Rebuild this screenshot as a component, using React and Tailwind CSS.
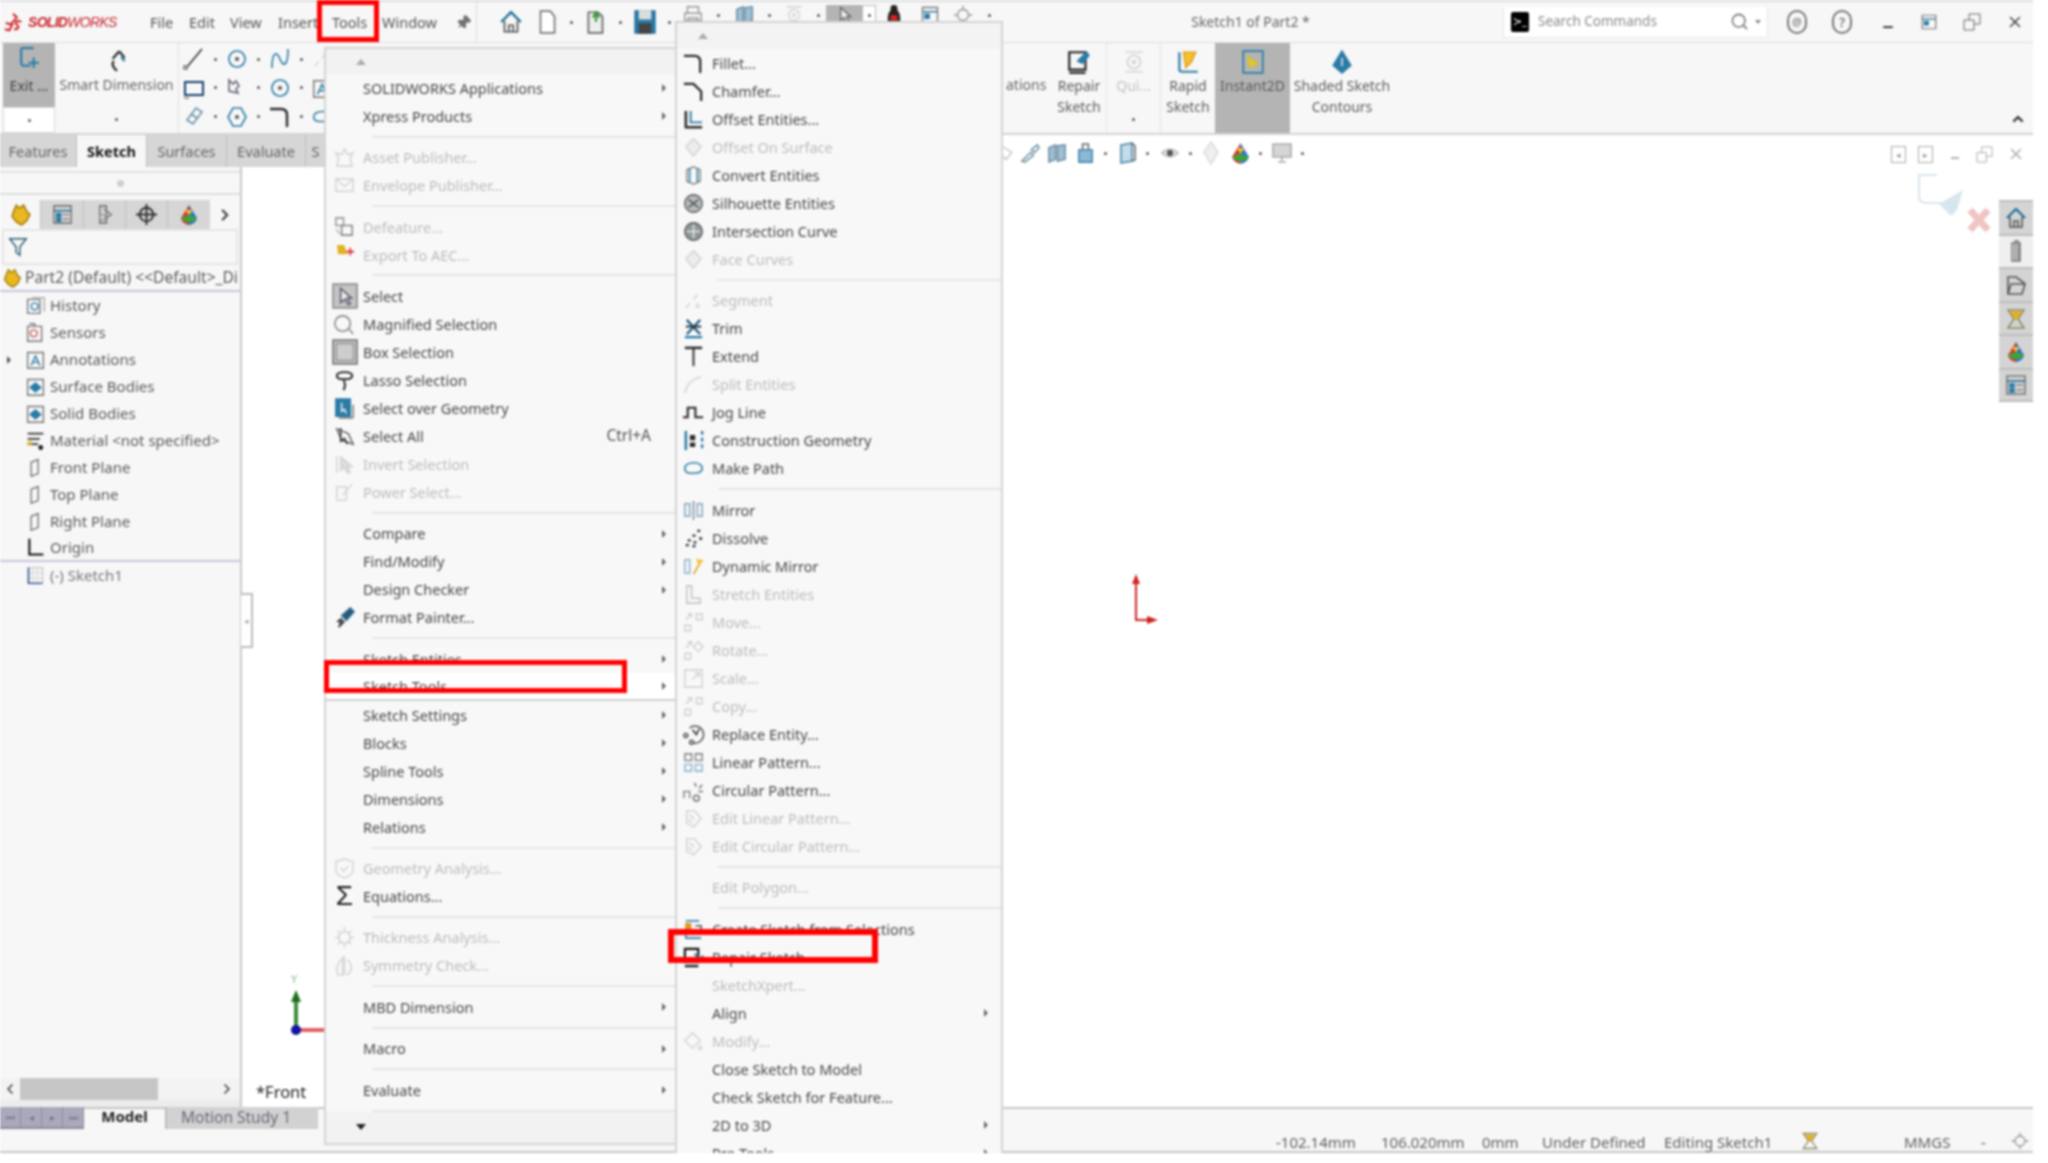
import { ChevronLeft, ChevronRight, ChevronUp, Search, X, Minus, Pin } from 'lucide-react';

const BLUE = '#2a7ba6';
const DARK = '#2b2b2b';
const GREY = '#8a8a8a';
const PALE = '#d4d4d4';

// each icon: list of [path, stroke, fill, strokeWidth]
const ICONS = {
  fillet: [['M2 4h11q6 0 6 6v12', DARK, null, 2.4]],
  chamfer: [['M2 4h10l8 8v10', DARK, null, 2.4]],
  offset: [['M4 3v17h17', DARK, null, 2.6], ['M9 3v12h12', BLUE, null, 2]],
  diamondPale: [['M12 3l8 8-8 10-8-10z', PALE, '#ececec']],
  cube: [['M5 6l7-3 7 3v12l-7 3-7-3z', GREY], ['M8 5v14M16 5v14', BLUE]],
  ball: [['M12 3a9 9 0 1 0 .01 0z', '#666', '#b5bcc0'], ['M7 8l10 8M17 8l-10 8', '#555']],
  ball2: [['M12 3a9 9 0 1 0 .01 0z', '#666', '#8f979b'], ['M5 12h14M12 5v14', '#e4e4e4']],
  segment: [['M4 20l4-5M12 11l4-5', PALE], ['M14 18h5M16 14v6', PALE]],
  trim: [['M3 21h18', BLUE, null, 2.4], ['M5 3l14 15M19 3L5 18', '#1e5f85', null, 2.4], ['M4 10h16', DARK, null, 2]],
  extend: [['M3 3h18', DARK, null, 2.6], ['M12 3v19', DARK, null, 2]],
  split: [['M3 21Q6 7 20 4', PALE]],
  jog: [['M1 17h5V7h8v10h8', DARK, null, 2.2]],
  construct: [['M4 2v20', BLUE, null, 2.6], ['M21 2v4M21 9v4M21 16v4', BLUE, null, 2.4], ['M9 7h4v4H9zM9 15h4v3H9z', DARK, DARK]],
  path: [['M3 12c0-5 6-6 10-6s8 2 8 6-5 5-9 5-9 0-9-5z', BLUE]],
  mirror: [['M12 2v20', GREY], ['M3 5h5v13H3zM16 5h5v13h-5z', '#7fa6bd']],
  dissolve: [['M6 14h3M11 9h3M16 4h3M4 19h3M12 16h3M18 12h3M11 20h3', DARK, null, 2.4]],
  dynamic: [['M3 5h5v14H3z', '#8fb2c8'], ['M12 20l8-14', '#e0a020'], ['M16 5l5 1-3 4z', '#f2c230', '#f2c230']],
  stretch: [['M5 3h5v13h9v5H5z', '#c4c4c4']],
  move: [['M4 9l6-6M6 3h4v4', PALE], ['M15 3h6v6h-6zM3 15h6v6H3z', PALE]],
  rotate: [['M4 9l6-6M6 3h4v4', PALE], ['M17 3l5 5-5 5-5-5zM3 15h6v6H3z', PALE]],
  scale: [['M3 3h18v18H3z', PALE], ['M11 13l7-7M13 6h5v5', PALE]],
  replace: [['M8 5a9 9 0 1 1 4 16', '#555'], ['M11 7l4 5 3-6', '#333'], ['M2 13a2 2 0 1 0 4 0 2 2 0 1 0-4 0M8 20a2 2 0 1 0 4 0 2 2 0 1 0-4 0', '#555']],
  linear: [['M3 3h7v7H3zM14 3h7v7h-7z', GREY], ['M3 14h7v7H3zM14 14h7v7h-7z', '#8fb6d0']],
  circular: [['M2 20v-7h6v7', GREY], ['M13 4l2 4M21 6l-3 4M22 13h-5M12 20a3 3 0 1 0 6 0 3 3 0 1 0-6 0', '#777']],
  editPale: [['M5 4h8l7 8-8 9-7-4z', PALE], ['M8 8l5 5M7 13l4 4', PALE]],
  createSk: [['M4 3h14', BLUE], ['M4 6h5v5H4z', '#e09a20', '#e09a20'], ['M4 12v9h16', BLUE], ['M14 8h6v7', '#555']],
  repair: [['M3 3h14v14H3z', '#111', null, 2.2], ['M3 21h14', '#111', null, 2.2], ['M13 8l6 6 3-4', BLUE, null, 2.2]],
  modify: [['M11 3l8 8-8 8-8-8z', PALE], ['M19 15v7M16 19h6', PALE]],
  asset: [['M12 3l3 6 6-2-3 6 2 8H4l2-8-3-6 6 2z', PALE]],
  envelope: [['M3 5h18v13H3zM3 5l9 8 9-8', PALE]],
  defeature: [['M3 3h8v8H3z', '#999'], ['M9 11h11v10H9z', '#888'], ['M3 15l5 5', '#bbb']],
  aec: [['M5 3h6l3 8H6z', '#e3b022', '#e3b022'], ['M18 5v8M14 9h8', '#d22']],
  select: [['M1 1h22v22H1z', '#8d8d8d', '#c4c4c4'], ['M8 5v13l4-3 3 5 2-1-3-5h4z', '#667', '#eee']],
  magnify: [['M10 3a8 8 0 1 0 .01 0zM16 16l5 6', '#888']],
  box: [['M1 1h22v22H1z', '#777', '#cdcdcd'], ['M4 4h16v16H4z', '#999']],
  lasso: [['M4 7c0-5 16-5 16 0s-16 5-16 0zM11 12q3 4 0 10', '#222', null, 2]],
  over: [['M3 2h15v18H3z', '#2a7ba6', '#2a7ba6'], ['M9 6v9l3-2 2 4', '#eee'], ['M21 8v14M6 22h15', '#777']],
  all: [['M4 4l12 5 5 11-12-4z', '#666'], ['M8 3v14l4-3 3 6', '#333']],
  invert: [['M4 3v18', PALE], ['M8 4v14l4-3 3 6 3-1-3-6h5z', PALE, '#dcdcdc']],
  power: [['M4 6h10v14H4z', PALE], ['M10 15L20 3', PALE]],
  painter: [['M18 2l4 4-8 9-5-5z', '#2a7ba6', '#33536b'], ['M9 13l-4 3 3 1-2 5 6-6', '#444', '#555']],
  geometry: [['M12 2l9 3v8q0 6-9 9-9-3-9-9V5z', PALE], ['M8 11l3 4 5-6', PALE]],
  thickness: [['M12 6a6 6 0 1 0 .01 0zM12 1v4M12 19v4M2 12h4M18 12h4M5 5l3 3M16 16l3 3M19 5l-3 3M8 16l-3 3', PALE]],
  symmetry: [['M12 2v20M5 22q-3-8 2-14l3-4v18zM15 6q7 6 2 14l-3 2', PALE]],
  history: [['M3 5h14v16H3z', '#777'], ['M8 3h14v16', '#aaa'], ['M11 9a4 4 0 1 0 .01 0z', BLUE]],
  sensors: [['M3 5h16v17H3z', '#777'], ['M10 9a4 4 0 1 0 .01 0z', '#c55'], ['M5 2h6v3', '#777']],
  annot: [['M3 4h18v18H3z', '#777'], ['M7 19l5-11 5 11M9 15h6', BLUE]],
  bodies: [['M3 4h18v18H3z', '#777'], ['M6 13l6-5 6 5-6 5z', BLUE, BLUE]],
  material: [['M3 4h18M3 10h14M3 16h12', '#333', null, 2], ['M4 14h3v3H4z', '#e3b022', '#e3b022'], ['M18 18a2 2 0 1 0 .01 0z', '#222', '#222']],
  plane: [['M15 3v16l-8 3V6z', '#777']],
  origin: [['M5 2v18h16', '#111', null, 2.4]],
  sketch: [['M4 3h16v18H4z', '#c8c8c8'], ['M9 3v18M14 3v18M4 9h16M4 15h16', '#dcdcdc'], ['M4 3v18h16', '#1f3f90']],
  home: [['M3 12l9-9 9 9', '#1f6c94', null, 2.2], ['M6 11v10h12V11M10 21v-6h4v6', '#555']],
  page: [['M6 2h9l4 5v15H6z', '#777', '#fff']],
  open: [['M5 3h9l4 4v15H5z', '#666', '#eee'], ['M12 3v9M9 8l3-5 3 5', '#3c9a3c', null, 2]],
  save: [['M3 2h18v20H3z', '#1d6d9b', '#2a7ba6'], ['M7 2h10v7H7z', '#ddd', '#ddd'], ['M7 14h10v8H7z', '#444', '#444']],
  print: [['M6 3h12v7H6zM3 10h18v8H3zM7 15h10v6H7z', '#999']],
  cursor: [['M8 3v15l4-3 3 6 3-1-3-6h5z', '#666', '#eee']],
  bottle: [['M12 2a3 3 0 0 1 3 3v2q3 3 3 7v7H6v-7q0-4 3-7V5a3 3 0 0 1 3-3z', '#222', '#222'], ['M9 13h6v4H9z', '#d22', '#d22']],
  wnd: [['M3 3h18v18H3z', '#777'], ['M3 8h18', '#1f6c94'], ['M6 11h5v5H6z', '#2a7ba6', '#2a7ba6']],
  gear: [['M12 6a6 6 0 1 0 .01 0zM12 2v4M12 18v4M2 12h4M18 12h4', '#999']],
  target: [['M12 5a7 7 0 1 0 .01 0z', '#333', null, 2], ['M12 1v22M1 12h22', '#333', null, 2]],
  config: [['M7 3h7v18H7z', '#777'], ['M11 6l8 6-8 6', '#777'], ['M10 12a3 3 0 1 0 .01 0z', '#999']],
  ribExit: [['M4 2h12', BLUE, null, 2], ['M4 2v14q0 3 4 3h5', BLUE, null, 2], ['M16 11v10M11 16h10', BLUE, null, 2]],
  dim: [['M14 3l5 6M14 3L8 10', '#333', null, 2.2], ['M9 12q-3 4 3 9', '#333', null, 2.2], ['M16 8l3 4', BLUE, null, 2.2]],
  line: [['M20 2L5 20', '#333'], ['M2 22h3v-3H2z', '#777']],
  circleB: [['M12 4a8 8 0 1 0 .01 0z', BLUE], ['M11 11h2v2h-2z', '#555']],
  spline: [['M4 21C4 4 9 4 12 12s8 8 8-10', BLUE]],
  rect: [['M3 6h18v13H3z', '#123f6b', null, 2], ['M2 22h5', GREY]],
  slot: [['M4 4l4 4 3-3 3 5-3 3 2 4-9-2z', '#667']],
  hex: [['M8 3h8l5 9-5 9H8l-5-9z', BLUE], ['M11 11h2v2h-2z', '#555']],
  chain: [['M5 15l9-12 6 4-9 12z', '#6a90a8'], ['M9 9l6 4', '#6a90a8']],
  repairRib: [['M3 3h15v16H3z', '#222', null, 2], ['M3 22h15', '#222', null, 2], ['M11 11l8-8 2 3-6 7z', BLUE, BLUE]],
  quick: [['M4 3h16M4 21h16', PALE], ['M12 6a6 6 0 1 0 .01 0z', PALE], ['M11 11h2v2h-2z', PALE]],
  rapid: [['M4 3v16q0 2 3 2h14', BLUE, null, 2], ['M8 3h11l-4 9-5 5z', '#e8a020', '#f2c230']],
  instant: [['M3 2h18v20H3z', BLUE], ['M7 7l9 6-7 4z', '#d8c030', '#e0c830']],
  shaded: [['M12 2l8 13-8 7-8-7z', '#2a7ba6', '#2a7ba6'], ['M12 8v8', '#cde']],
  hud1: [['M5 3l14 8-7 9-7-8z', '#b8c4cc']],
  hud2: [['M3 20l9-9 3 3-9 7zM13 8l6-5 2 3-5 5z', '#6f8fa3']],
  hud3: [['M3 6l7-3v15l-7 3zM12 4l8-1v15l-8 2z', '#6f8fa3', '#9fc0d4']],
  hud4: [['M5 8h14v13H5z', '#4a88ad', '#8ab9d4'], ['M9 8V2h6v6', '#666']],
  hud5: [['M5 4l11-2v18l-11 2z', '#4a88ad', '#c4dce9'], ['M16 2l3 3v14l-3 1', '#666']],
  eye: [['M2 12q10-9 20 0-10 9-20 0z', '#bbb', '#e3e3e3'], ['M12 9a3 3 0 1 0 .01 0z', '#555', '#555']],
  hudDiamond: [['M12 1l7 10-7 12-7-12z', '#ddd', '#efefef']],
  monitor: [['M3 3h18v13H3z', '#aaa', '#d5d5d5'], ['M12 16v4M8 21h8', '#aaa']],
  folder: [['M4 21V4h8l8 6v1M4 21l3-10h14l-3 10z', '#555']],
  parts: [['M8 4h8v18H8zM11 4v18M14 4v18', '#777'], ['M10 2h5', '#777']],
  appear: [['M4 3h16l-6 9 6 9H4l6-9z', '#8c8c6a'], ['M7 5h10l-5 7z', '#e3b022', '#e3b022']],
  custom: [['M3 3h18v18H3z', '#777'], ['M3 8h18', '#1f6c94'], ['M6 11h4v3H6zM6 16h4v3H6z', '#2a7ba6', '#2a7ba6'], ['M12 12h7M12 17h7', '#888']],
  filter: [['M3 3h18l-7 9v9l-4-3v-6z', '#2b5a70']],
  part: [['M5 10l3-7 3 3 4-3 3 6 3 3-3 6-5 4-5-3-4-5z', '#a87f12', '#e8b820']],
};

function Ico({ name, size = 22, className = '' }) {
  const parts = ICONS[name] || [];
  return (
    <svg viewBox="0 0 24 24" width={size} height={size} fill="none" strokeWidth="1.6" className={`shrink-0 ${className}`}>
      {parts.map((p, i) => <path key={i} d={p[0]} stroke={p[1]} fill={p[2] || 'none'} strokeWidth={p[3]} />)}
    </svg>
  );
}

// colour wheel used for the appearance buttons
function Wheel({ size = 22 }) {
  return (
    <svg viewBox="0 0 24 24" width={size} height={size} className="shrink-0">
      <path d="M12 2L4 15a9 8 0 0 0 8 7z" fill="#d7372c" />
      <path d="M12 2l8 13a9 8 0 0 1-8 7z" fill="#2f6fd0" />
      <path d="M4 15a9 8 0 0 0 16 0l-8-3z" fill="#3aa63a" />
      <path d="M12 12l-4-5h8z" fill="#f2c230" />
    </svg>
  );
}

const SEP = '-';
const TOOLS_MENU = [
  { t: 'SOLIDWORKS Applications', sub: 1 }, { t: 'Xpress Products', sub: 1 }, SEP,
  { t: 'Asset Publisher...', i: 'asset', off: 1 }, { t: 'Envelope Publisher...', i: 'envelope', off: 1 }, SEP,
  { t: 'Defeature...', i: 'defeature', off: 1 }, { t: 'Export To AEC...', i: 'aec', off: 1 }, SEP,
  { t: 'Select', i: 'select' }, { t: 'Magnified Selection', i: 'magnify' }, { t: 'Box Selection', i: 'box' },
  { t: 'Lasso Selection', i: 'lasso' }, { t: 'Select over Geometry', i: 'over' }, { t: 'Select All', i: 'all', key: 'Ctrl+A' },
  { t: 'Invert Selection', i: 'invert', off: 1 }, { t: 'Power Select...', i: 'power', off: 1 }, SEP,
  { t: 'Compare', sub: 1 }, { t: 'Find/Modify', sub: 1 }, { t: 'Design Checker', sub: 1 }, { t: 'Format Painter...', i: 'painter' }, SEP,
  { t: 'Sketch Entities', sub: 1 }, { t: 'Sketch Tools', sub: 1, hot: 1 }, { t: 'Sketch Settings', sub: 1 }, { t: 'Blocks', sub: 1 },
  { t: 'Spline Tools', sub: 1 }, { t: 'Dimensions', sub: 1 }, { t: 'Relations', sub: 1 }, SEP,
  { t: 'Geometry Analysis...', i: 'geometry', off: 1 }, { t: 'Equations...', sigma: 1 }, SEP,
  { t: 'Thickness Analysis...', i: 'thickness', off: 1 }, { t: 'Symmetry Check...', i: 'symmetry', off: 1 }, SEP,
  { t: 'MBD Dimension', sub: 1 }, SEP, { t: 'Macro', sub: 1 }, SEP, { t: 'Evaluate', sub: 1 },
];

const SKETCH_MENU = [
  { t: 'Fillet...', i: 'fillet' }, { t: 'Chamfer...', i: 'chamfer' }, { t: 'Offset Entities...', i: 'offset' },
  { t: 'Offset On Surface', i: 'diamondPale', off: 1 }, { t: 'Convert Entities', i: 'cube' }, { t: 'Silhouette Entities', i: 'ball' },
  { t: 'Intersection Curve', i: 'ball2' }, { t: 'Face Curves', i: 'diamondPale', off: 1 }, SEP,
  { t: 'Segment', i: 'segment', off: 1 }, { t: 'Trim', i: 'trim' }, { t: 'Extend', i: 'extend' }, { t: 'Split Entities', i: 'split', off: 1 },
  { t: 'Jog Line', i: 'jog' }, { t: 'Construction Geometry', i: 'construct' }, { t: 'Make Path', i: 'path' }, SEP,
  { t: 'Mirror', i: 'mirror' }, { t: 'Dissolve', i: 'dissolve' }, { t: 'Dynamic Mirror', i: 'dynamic' }, { t: 'Stretch Entities', i: 'stretch', off: 1 },
  { t: 'Move...', i: 'move', off: 1 }, { t: 'Rotate...', i: 'rotate', off: 1 }, { t: 'Scale...', i: 'scale', off: 1 }, { t: 'Copy...', i: 'move', off: 1 },
  { t: 'Replace Entity...', i: 'replace' }, { t: 'Linear Pattern...', i: 'linear' }, { t: 'Circular Pattern...', i: 'circular' },
  { t: 'Edit Linear Pattern...', i: 'editPale', off: 1 }, { t: 'Edit Circular Pattern...', i: 'editPale', off: 1 }, SEP,
  { t: 'Edit Polygon...', off: 1 }, SEP,
  { t: 'Create Sketch from Selections', i: 'createSk' }, { t: 'Repair Sketch', i: 'repair' }, { t: 'SketchXpert...', off: 1 },
  { t: 'Align', sub: 1 }, { t: 'Modify...', i: 'modify', off: 1 }, { t: 'Close Sketch to Model' }, { t: 'Check Sketch for Feature...' },
  { t: '2D to 3D', sub: 1 }, { t: 'Pro Tools', sub: 1 },
];

function MenuRow({ row, indent, subGap }) {
  return (
    <div className={`h-[28px] flex items-center shrink-0 ${row.hot ? 'bg-white border-b-2 border-[#cfcfcf]' : ''}`}>
      <div className="w-[37px] flex justify-center" style={{ marginLeft: indent }}>
        {row.i && <Ico name={row.i} size={row.i === 'select' || row.i === 'box' ? 26 : 23} />}
        {row.sigma && <span className="text-[28px] leading-none text-[#222] font-['Liberation_Sans']">Σ</span>}
      </div>
      <span className={`flex-1 whitespace-nowrap ${row.off ? 'text-[#bcbcbc]' : 'text-[#474747]'}`}>{row.t}</span>
      {row.key && <span className="text-[#555] text-[15.5px] mr-[24px]">{row.key}</span>}
      {row.sub && <span style={{ marginRight: subGap }} className="w-0 h-0 border-y-[4px] border-y-transparent border-l-[4px] border-l-[#666]" />}
    </div>
  );
}

function MenuRows({ rows, sepLeft, sepH, indent, subGap }) {
  return rows.map((row, i) => row === SEP
    ? <div key={i} className="flex items-center shrink-0" style={{ paddingLeft: sepLeft, height: sepH }}><div className="h-[2px] w-full bg-[#e6e6e6]" /></div>
    : <MenuRow key={i} row={row} indent={indent} subGap={subGap} />);
}

function Dot() {
  return <span className="block w-[3px] h-[3px] rounded-full bg-[#555] shrink-0" />;
}

// row of toolbar items placed by their centre x, measured from the row's left edge
function Spaced({ items, className = '' }) {
  let end = 0;
  return (
    <div className={`flex items-center ${className}`}>
      {items.map(([cx, size, node], i) => {
        const ml = cx - size / 2 - end;
        end = cx + size / 2;
        return <span key={i} style={{ marginLeft: ml, width: size }} className="shrink-0 flex justify-center">{node}</span>;
      })}
    </div>
  );
}

function TitleBar() {
  return (
    <div className="h-[43px] shrink-0 flex items-center border-t-2 border-[#dedede] bg-[#f7f7f7] border-b border-b-[#dcdcdc]">
      <div className="w-[150px] flex items-center pl-[3px] gap-[3px]">
        <svg viewBox="0 0 24 24" width="22" height="24" fill="none" stroke="#d2232a" strokeWidth="2.2">
          <path d="M11 3l4 4-6 7M3 13l7 2-3 6-5-1M20 12c-5-3-8 1-5 3s2 5-3 5" />
        </svg>
        <span className="text-[14px] italic text-[#c8242b] font-['Liberation_Sans'] tracking-[-0.7px]"><b>SOLID</b>WORKS</span>
      </div>
      {[['File', 39], ['Edit', 41], ['View', 48], ['Insert', 54], ['Tools', 50], ['Window', 76]].map(([m, w]) => (
        <span key={m} style={{ width: w }} className="text-[#555] shrink-0">{m}</span>
      ))}
      <Pin size={15} className="text-[#666] rotate-45 fill-[#777] shrink-0 -ml-[2px]" />
      <div className="w-px h-[40px] bg-[#dcdcdc] ml-[5px] mr-[21px] shrink-0" />
      <div className="flex items-center gap-[10px]">
        <Ico name="home" size={26} /><Ico name="page" size={26} /><Dot /><Ico name="open" size={26} /><Dot /><Ico name="save" size={26} /><Dot />
      </div>
      <div className="flex-1 text-center text-[#666] text-[14px] pl-[327px]">Sketch1 of Part2 *</div>
      <div className="w-[265px] h-[31px] bg-white border-r border-b border-l border-[#e5e5e5] flex items-center pl-[7px] mr-[19px]">
        <div className="w-[18px] h-[20px] bg-black rounded-[2px] text-white text-[11px] leading-[18px] pl-[2px] shrink-0">≻_</div>
        <span className="ml-[9px] flex-1 text-[#8a8a8a] text-[13.5px]">Search Commands</span>
        <Search size={19} className="text-[#777] mr-[6px]" />
        <span className="w-0 h-0 mr-[6px] border-x-[3px] border-x-transparent border-t-[4px] border-t-[#888]" />
      </div>
      <div className="flex items-center gap-[25px] pr-[9px]">
        <span className="w-[20px] h-[24px] rounded-full border-2 border-[#777] text-center text-[11px] leading-[20px] text-[#666]">@</span>
        <span className="w-[20px] h-[24px] mr-[4px] rounded-full border-2 border-[#777] text-center text-[13px] leading-[20px] text-[#444]">?</span>
        <Minus size={14} className="text-[#222] mt-[10px]" strokeWidth={3} />
        <Ico name="wnd" size={18} />
        <svg viewBox="0 0 18 18" width="18" height="18" fill="none" stroke="#666"><path d="M1 7h10v10H1zM6 7V1h11v10h-6" /></svg>
        <X size={18} className="text-[#444]" />
      </div>
    </div>
  );
}

function RibbonBtn({ w, icon, lines, grey, dot, dim }) {
  return (
    <div style={{ width: w }} className={`shrink-0 h-full flex flex-col items-center pt-[6px] ${grey ? 'bg-[#b4b4b4]' : ''}`}>
      <Ico name={icon} size={26} />
      <div className={`leading-[21px] text-[14px] text-center whitespace-nowrap ${dim ? 'text-[#c2c2c2]' : 'text-[#5c5c5c]'}`}>
        {lines.map((l) => <div key={l}>{l}</div>)}
      </div>
      {dot && <div className="mt-auto mb-[12px]"><Dot /></div>}
    </div>
  );
}

function Ribbon() {
  const cols = [['line', 'rect', 'chain'], ['circleB', 'slot', 'hex'], ['spline', 'circleB', 'fillet']];
  return (
    <div className="h-[92px] shrink-0 flex bg-[#f7f7f7] border-b-2 border-[#d4d4d4] relative">
      <div className="w-[52px] ml-[3px] shrink-0 flex flex-col">
        <div className="h-[64px] bg-[#b4b4b4] flex flex-col items-center pt-[3px]">
          <Ico name="ribExit" size={25} />
          <span className="mt-[8px] text-[#444] text-[14px]">Exit ...</span>
        </div>
        <div className="flex-1 bg-white border border-[#d8d8d8] flex items-center justify-center"><Dot /></div>
      </div>
      <div className="w-[124px] shrink-0 flex flex-col items-center pt-[5px] border-r border-[#e2e2e2]">
        <Ico name="dim" size={26} />
        <span className="mt-[4px] text-[#666] text-[14px] whitespace-nowrap">Smart Dimension</span>
        <div className="mt-auto mb-[12px]"><Dot /></div>
      </div>
      <div className="flex flex-col justify-around py-[2px] pl-[3px]">
        {[0, 1, 2].map((r) => (
          <div key={r} className="flex items-center gap-[8px]">
            {cols.map((c, i) => (
              <div key={i} className="flex items-center gap-[8px]"><Ico name={c[r]} size={24} /><Dot /></div>
            ))}
            <Ico name={['segment', 'annot', 'path'][r]} size={22} />
          </div>
        ))}
      </div>
      <div className="w-[719px] shrink-0" />
      <div className="shrink-0 flex h-full">
        <RibbonBtn w={54} icon="repairRib" lines={['Repair', 'Sketch']} />
        <div className="w-px bg-[#e4e4e4]" />
        <RibbonBtn w={53} icon="quick" lines={['Qui...']} dim dot />
        <div className="w-px bg-[#e4e4e4]" />
        <RibbonBtn w={54} icon="rapid" lines={['Rapid', 'Sketch']} />
        <RibbonBtn w={75} icon="instant" lines={['Instant2D']} grey />
        <RibbonBtn w={104} icon="shaded" lines={['Shaded Sketch', 'Contours']} />
      </div>
      <ChevronUp size={16} strokeWidth={3.5} className="absolute right-[7px] bottom-[6px] text-[#333]" />
    </div>
  );
}

function TabsRow() {
  const tabs = [['Features', 77], ['Sketch', 70, 1], ['Surfaces', 80], ['Evaluate', 79], ['S', 20]];
  // centres are page x minus the 1002px where this row starts
  const hud = [
    [4, 20, <Ico name="hud1" size={20} />], [28, 23, <Ico name="hud2" size={23} />], [55, 23, <Ico name="hud3" size={23} />], [83, 23, <Ico name="hud4" size={23} />],
    [103, 3, <Dot />], [126, 24, <Ico name="hud5" size={24} />], [145, 3, <Dot />], [168, 20, <Ico name="eye" size={20} />], [188, 3, <Dot />],
    [209, 24, <Ico name="hudDiamond" size={24} />], [238, 25, <Wheel size={25} />], [258, 3, <Dot />], [280, 24, <Ico name="monitor" size={24} />], [300, 3, <Dot />],
  ];
  return (
    <div className="h-[32px] shrink-0 flex">
      {tabs.map(([t, w, on]) => (
        <div key={t} style={{ width: w }} className={`shrink-0 flex items-center justify-center border-r border-[#bdbdbd] ${on ? 'bg-[#f7f7f7] text-[#111] font-bold' : 'bg-[#d6d6d6] text-[#666]'}`}>{t}</div>
      ))}
      <div className="w-[676px] shrink-0" />
      <Spaced items={hud} className="h-[32px] mt-[2px] w-[310px] shrink-0" />
      <div className="flex-1 flex items-center justify-end gap-[9px] pr-[8px] mt-[6px] text-[#999]">
        <span className="w-[15px] h-[17px] border border-[#aaa] text-[9px] leading-[15px] text-center">◂</span>
        <span className="w-[15px] h-[17px] border border-[#aaa] ml-[3px] text-[9px] leading-[15px] text-center">▸</span>
        <Minus size={12} className="ml-[7px] mt-[8px]" strokeWidth={3} />
        <svg viewBox="0 0 18 18" width="17" height="17" fill="none" stroke="#aaa" className="ml-[6px]"><path d="M1 7h10v10H1zM6 7V1h11v10h-6" /></svg>
        <X size={18} className="text-[#aaa] ml-[5px]" />
      </div>
    </div>
  );
}

const TREE = [
  ['History', 'history'], ['Sensors', 'sensors'], ['Annotations', 'annot', 1], ['Surface Bodies', 'bodies'], ['Solid Bodies', 'bodies'],
  ['Material <not specified>', 'material'], ['Front Plane', 'plane'], ['Top Plane', 'plane'], ['Right Plane', 'plane'], ['Origin', 'origin'],
];

function LeftPanel() {
  return (
    <div className="w-[242px] shrink-0 bg-[#f7f7f7] border-r-2 border-[#c9c9c9] flex flex-col text-[15px]">
      <div className="h-[6px] border-b-2 border-[#e2e2e2]" />
      <div className="h-[22px] border-b-2 border-[#dedede] flex items-center justify-center"><span className="w-[7px] h-[7px] rounded-full bg-[#cfcfcf]" /></div>
      <div className="h-[5px]" />
      <div className="h-[29px] flex">
        <div className="w-[40px] flex items-center justify-center"><Ico name="part" size={25} /></div>
        {[['custom', 43], ['config', 42], ['target', 42]].map(([ic, w]) => (
          <div key={ic} style={{ width: w }} className="flex items-center justify-center bg-[#d6d6d6] border-l border-[#c0c0c0]"><Ico name={ic} size={23} /></div>
        ))}
        <div className="w-[43px] flex items-center justify-center bg-[#d6d6d6] border-l border-[#c0c0c0]"><Wheel size={24} /></div>
        <div className="flex-1 flex items-center justify-center"><ChevronRight size={18} className="text-[#444]" strokeWidth={3} /></div>
      </div>
      <div className="h-[36px] mx-[2px] bg-[#f7f7f7] border-2 border-[#e6e6e6] flex items-center pl-[3px]"><Ico name="filter" size={22} /></div>
      <div className="h-[27px] border-b-2 border-[#c7c5de] flex items-center whitespace-nowrap overflow-hidden">
        <Ico name="part" size={22} className="ml-[1px] mr-[2px]" /><span className="text-[#5c5c5c] text-[15.6px]">Part2 (Default) &lt;&lt;Default&gt;_Di</span>
      </div>
      {TREE.map(([t, ic, exp], i) => (
        <div key={t} className={`h-[27px] shrink-0 flex items-center relative ${i === 9 ? 'border-b-2 border-[#c7c5de]' : ''}`}>
          {exp && <span className="absolute left-[7px] w-0 h-0 border-y-[4px] border-y-transparent border-l-[4px] border-l-[#555]" />}
          <span className="w-[50px] flex justify-center pl-[20px]"><Ico name={ic} size={21} /></span>
          <span className="text-[#5a5a5a] whitespace-nowrap">{t}</span>
        </div>
      ))}
      <div className="h-[27px] shrink-0 flex items-center">
        <span className="w-[50px] flex justify-center pl-[20px]"><Ico name="sketch" size={21} /></span>
        <span className="text-[#777]">(-) Sketch1</span>
      </div>
      <div className="flex-1" />
      <div className="h-[22px] flex items-center bg-[#f3f3f3]">
        <ChevronLeft size={16} className="text-[#444] w-[20px]" strokeWidth={2.5} />
        <div className="w-[138px] h-full bg-[#c6c6c6]" />
        <div className="flex-1" />
        <ChevronRight size={16} className="mr-[5px] text-[#444]" strokeWidth={2.5} />
      </div>
      <div className="h-[7px] bg-[#ececec]" />
    </div>
  );
}

function BottomBar() {
  const status = [['-102.14mm', 105], ['106.020mm', 101], ['0mm', 60], ['Under Defined', 122], ['Editing Sketch1', 136]];
  return (
    <div className="h-[46px] shrink-0 flex bg-[#f7f7f7] border-y-2 border-[#c6c6c6] relative">
      <div className="flex h-[22px] -mt-[2px] shrink-0">
        <div className="w-[84px] flex bg-[#a9a9bb] border-b-2 border-[#8a8a9c]">
          {['⏮', '◂', '▸', '⏭'].map((g) => <span key={g} className="flex-1 border-r border-[#8d8d9f] text-center text-[10px] text-[#77778a] leading-[20px]">{g}</span>)}
        </div>
        <div className="w-[81px] flex items-center justify-center pb-[3px] font-bold text-[15px] text-[#222]">Model</div>
        <div className="w-[153px] flex items-center pl-[14px] pb-[1px] bg-[#d2d2d2] border-l-2 border-[#bbb] text-[#6a6a7a] text-[15.5px] whitespace-nowrap">Motion Study 1</div>
      </div>
      <div className="flex-1 flex items-end justify-end text-[#5e5e5e] text-[15px] leading-[17px] pr-[3px]">
        {status.map(([s, w]) => <span key={s} style={{ width: w }} className="shrink-0 whitespace-nowrap">{s}</span>)}
        <span className="w-[104px]"><Ico name="appear" size={20} /></span>
        <span className="w-[77px]">MMGS</span>
        <span className="w-[29px]">-</span>
        <Ico name="gear" size={20} />
      </div>
    </div>
  );
}

export default function App() {
  // part of the quick access bar that shows above the flyout; centres from x = 680
  const hiddenBar = [
    [13, 22, <Ico name="print" size={22} />], [38, 3, <Dot />], [65, 22, <Ico name="hud3" size={22} />], [89, 3, <Dot />],
    [114, 22, <Ico name="quick" size={22} />], [138, 3, <Dot />],
    [164, 36, <span className="w-[36px] h-[21px] bg-[#b4b4b4] flex justify-center"><Ico name="cursor" size={20} /></span>],
    [189, 14, <span className="w-[14px] h-[21px] bg-white border border-[#bbb] flex items-center justify-center"><Dot /></span>],
    [214, 22, <Ico name="bottle" size={22} />], [250, 20, <Ico name="wnd" size={20} />], [283, 22, <Ico name="gear" size={22} />], [309, 3, <Dot />],
  ];
  return (
    <div className="relative w-[2048px] h-[1163px] bg-white overflow-hidden blur-[0.8px] font-['Noto_Sans',sans-serif] text-[14.5px] leading-none">
      <div className="w-[2033px] h-[1153px] flex flex-col">
        <TitleBar />
        <Ribbon />
        <TabsRow />
        <div className="flex-1 flex min-h-0">
          <LeftPanel />
          <div className="flex-1" />
        </div>
        <BottomBar />
      </div>

      {/* hidden tools behind the Sketch Tools flyout */}
      <Spaced items={hiddenBar} className="absolute left-[680px] top-[4px] h-[22px]" />
      <span className="absolute left-[1006px] top-[78px] text-[14px] text-[#666]">ations</span>

      {/* graphics area overlays */}
      <div className="absolute left-[241px] top-[593px] w-[12px] h-[55px] bg-white border-2 border-l-0 border-[#bdbdbd] flex items-center justify-center text-[9px] text-[#aaa]">◂</div>
      <span className="absolute left-[256px] top-[1084px] text-[16.5px] text-[#222]">*Front</span>
      <span className="absolute left-[291px] top-[973px] text-[11px] text-[#8dc08d]">Y</span>
      <svg className="absolute left-[285px] top-[970px]" width="50" height="70" viewBox="0 0 50 70" fill="none">
        <path d="M11 60V30" stroke="#3c8c3c" strokeWidth="4" />
        <path d="M6 32l5-12 5 12z" fill="#1e6e1e" />
        <path d="M12 60h30" stroke="#e06060" strokeWidth="4" />
        <circle cx="11" cy="60" r="5" fill="#1212a0" />
      </svg>
      <svg className="absolute left-[1125px] top-[570px]" width="40" height="60" viewBox="0 0 40 60" fill="none">
        <path d="M11 12v38h14" stroke="#d02020" strokeWidth="2" />
        <path d="M7 14l4-10 4 10z" fill="#d02020" />
        <path d="M22 46l11 4-11 4z" fill="#d02020" />
      </svg>
      <svg className="absolute left-[1917px] top-[172px]" width="76" height="66" viewBox="0 0 76 66" fill="none">
        <path d="M20 3H2v22q0 6 8 6h16" stroke="#cfdfe8" strokeWidth="1.6" />
        <path d="M22 32l24-14-6 20-6 6z" fill="#d6e6ee" />
        <path d="M53 38l18 20M71 38L53 58" stroke="#efc4c4" strokeWidth="7" />
      </svg>
      <div className="absolute left-[1999px] top-[200px] w-[34px] flex flex-col">
        {['home', 'parts', 'folder', 'appear', null, 'custom'].map((ic, i) => (
          <div key={i} className={`h-[33.6px] flex items-center justify-center border-t-2 border-[#bdbdbd] ${i === 1 ? 'bg-[#efefef]' : 'bg-[#d4d4d4]'} ${i === 5 ? 'border-b-2' : ''}`}>
            {ic ? <Ico name={ic} size={24} /> : <Wheel size={24} />}
          </div>
        ))}
      </div>

      {/* Tools menu */}
      <div className="absolute left-[324px] top-[47px] w-[351px] h-[1098px] bg-[#f8f8f8] border-l-2 border-t-2 border-b-2 border-[#d4d4d4] flex flex-col">
        <div className="h-[25px] shrink-0 bg-[#f2f2f2] flex items-center pl-[30px]"><span className="w-0 h-0 border-x-[5px] border-x-transparent border-b-[6px] border-b-[#aaa]" /></div>
        <MenuRows rows={TOOLS_MENU} sepLeft={46} sepH={13.4} indent={0} subGap={9} />
        <div className="h-[6px] shrink-0" />
        <div className="h-[2px] ml-[46px] shrink-0 bg-[#e6e6e6]" />
        <div className="flex-1 bg-[#f2f2f2] flex items-center pl-[30px]"><span className="w-0 h-0 border-x-[5px] border-x-transparent border-t-[6px] border-t-[#222]" /></div>
      </div>

      {/* Sketch Tools flyout */}
      <div className="absolute left-[675px] top-[21px] w-[328px] h-[1132px] bg-[#f8f8f8] border-x-2 border-t-2 border-[#d4d4d4] overflow-hidden flex flex-col">
        <div className="h-[26px] shrink-0 bg-[#f3f3f3] flex items-center pl-[21px]"><span className="w-0 h-0 border-x-[5px] border-x-transparent border-b-[6px] border-b-[#aaa]" /></div>
        <MenuRows rows={SKETCH_MENU} sepLeft={41} sepH={13.5} indent={-2} subGap={13} />
      </div>

      {/* red callouts from the tutorial */}
      <div className="absolute left-[317px] top-0 w-[62px] h-[42px] border-[5px] border-[#f00]" />
      <div className="absolute left-[324px] top-[660px] w-[303px] h-[33px] border-[5px] border-[#f00]" />
      <div className="absolute left-[668px] top-[929px] w-[210px] h-[34px] border-[6px] border-[#f00]" />
    </div>
  );
}
